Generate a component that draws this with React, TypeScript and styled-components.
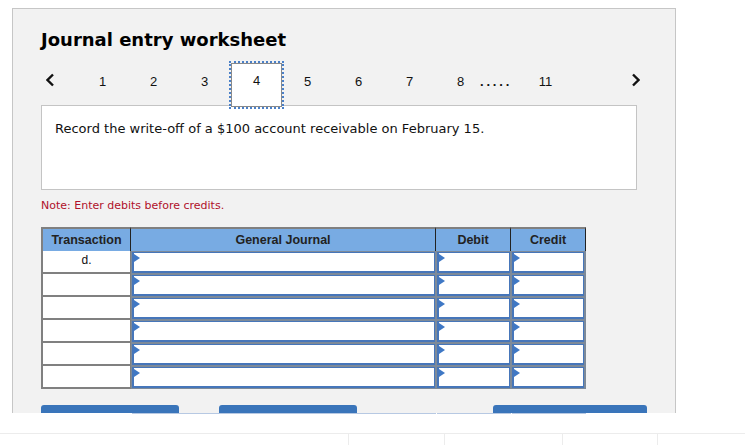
import React from 'react';
import styled, { createGlobalStyle } from 'styled-components';

const GlobalStyle = createGlobalStyle`
  body {
    margin: 0;
    background: #ffffff;
    font-family: "DejaVu Sans", Verdana, sans-serif;
  }
`;

const Page = styled.div`
  width: 745px;
  height: 445px;
  overflow: hidden;
  padding: 8px 0 0 12px;
  box-sizing: border-box;
`;

const Panel = styled.div`
  width: 664px;
  height: 405px;
  box-sizing: border-box;
  border: 1px solid #c6c6c6;
  border-bottom: none;
  background: #f2f2f2;
  overflow: hidden;
  padding: 20px 0 0 28px;
`;

const Title = styled.h1`
  margin: 0;
  font-family: "DejaVu Sans", Verdana, sans-serif;
  font-weight: bold;
  font-size: 18px;
  line-height: 22px;
  color: #000;
`;

const Pager = styled.div`
  display: flex;
  align-items: flex-start;
  width: 599px;
  height: 44px;
  margin-top: 12px;
  font-family: "Liberation Sans", Arial, sans-serif;
  font-size: 13px;
  color: #111;
`;

const Arrow = styled.div<{ $right?: boolean }>`
  width: 36px;
  height: 34px;
  display: flex;
  align-items: center;
  justify-content: ${(p) => (p.$right ? 'flex-end' : 'flex-start')};
  padding: 0 ${(p) => (p.$right ? '0' : '5px')};
  box-sizing: border-box;
  margin-left: ${(p) => (p.$right ? 'auto' : '0')};
`;

const PageItem = styled.div<{ $active?: boolean }>`
  position: relative;
  z-index: 1;
  width: 51px;
  height: 44px;
  box-sizing: border-box;
  text-align: center;
  padding-top: ${(p) => (p.$active ? '9px' : '11px')};
  line-height: 15px;
  background: ${(p) => (p.$active ? '#ffffff' : 'transparent')};
  border: ${(p) => (p.$active ? '1px solid #8a8a8a' : 'none')};
  outline: ${(p) => (p.$active ? '2px dotted #4a80c8' : 'none')};
  outline-offset: 0;
  margin-left: ${(p) => (p.$active ? '1px' : '0')};
`;

const Dots = styled.div`
  width: 32px;
  margin-left: -6px;
  padding-top: 11px;
  line-height: 15px;
  font-weight: bold;
  letter-spacing: 2.8px;
`;

const LastItem = styled(PageItem)`
  margin-left: 8px;
`;

const Question = styled.div`
  width: 596px;
  height: 85px;
  margin-top: -2px;
  box-sizing: border-box;
  background: #ffffff;
  border: 1px solid #c4c4c4;
  padding: 15px 0 0 13px;
  font-size: 13px;
  line-height: 16px;
  color: #111;
`;

const Note = styled.div`
  margin-top: 9px;
  font-size: 11px;
  line-height: 13px;
  color: #b0102a;
`;

const Grid = styled.div`
  display: grid;
  grid-template-columns: 90px 305px 75px 75px;
  width: 545px;
  margin-top: 15px;
  font-family: "Liberation Sans", Arial, sans-serif;
  font-size: 12.5px;
`;

const HeadCell = styled.div<{ $first?: boolean }>`
  height: 24px;
  box-sizing: border-box;
  background: #78abe3;
  border-top: 2px solid #808080;
  border-left: ${(p) => (p.$first ? '2px solid #808080' : 'none')};
  border-right: 1px solid #222;
  display: flex;
  align-items: center;
  justify-content: center;
  font-weight: bold;
  color: #222;
`;

const TxCell = styled.div`
  height: 23px;
  box-sizing: border-box;
  background: #ffffff;
  border-left: 2px solid #808080;
  border-right: 1px solid #808080;
  border-bottom: 2px solid #808080;
  text-align: center;
  line-height: 19px;
  font-size: 12px;
  color: #111;
`;

const EntryCell = styled.div<{ $last?: boolean }>`
  height: 23px;
  box-sizing: border-box;
  background: #7d8a99;
  padding: 1px ${(p) => (p.$last ? '2px' : '1px')} 1px 1px;
`;

const EntryBox = styled.div`
  position: relative;
  height: 100%;
  box-sizing: border-box;
  background: #ffffff;
  border: 1px solid #4676ba;
  border-left-width: 2px;
  border-bottom-width: 2px;

  &::before {
    content: '';
    position: absolute;
    left: 0;
    top: 1px;
    border-top: 4px solid transparent;
    border-bottom: 4px solid transparent;
    border-left: 6px solid #3f78c5;
  }
`;

const Buttons = styled.div`
  display: flex;
  margin-top: 16px;
`;

const ActionButton = styled.div<{ $w: number; $gap: number }>`
  width: ${(p) => p.$w}px;
  height: 20px;
  margin-left: ${(p) => p.$gap}px;
  background: #3a75ba;
  border-radius: 3px 3px 0 0;
`;

const Below = styled.div`
  position: relative;
  height: 32px;
`;

const BlueLine = styled.div`
  display: flex;
  margin-left: 120px;
  height: 1px;
`;

const BlueSeg = styled.div<{ $w: number }>`
  width: ${(p) => p.$w}px;
  margin-right: 1px;
  background: #b7c9e3;
`;

const Footer = styled.div`
  display: flex;
  margin-top: 19px;
  margin-left: -12px;
  height: 12px;
  border-top: 1px solid #ececec;
`;

const FooterCol = styled.div<{ $w: number }>`
  width: ${(p) => p.$w}px;
  border-right: 1px solid #ececec;
`;

const Chevron = ({ right }: { right?: boolean }) => (
  <svg width="9" height="14" viewBox="0 0 9 14">
    <path
      d={right ? 'M2 1.5 L7.5 7 L2 12.5' : 'M7 1.5 L1.5 7 L7 12.5'}
      fill="none"
      stroke="#111"
      strokeWidth="2.4"
    />
  </svg>
);

const rows = ['d.', '', '', '', '', ''];

export default function App() {
  return (
    <>
      <GlobalStyle />
      <Page>
        <Panel>
          <Title>Journal entry worksheet</Title>
          <Pager>
            <Arrow>
              <Chevron />
            </Arrow>
            {[1, 2, 3, 4, 5, 6, 7, 8].map((n) => (
              <PageItem key={n} $active={n === 4}>
                {n}
              </PageItem>
            ))}
            <Dots>.....</Dots>
            <LastItem>11</LastItem>
            <Arrow $right>
              <Chevron right />
            </Arrow>
          </Pager>
          <Question>
            Record the write-off of a $100 account receivable on February 15.
          </Question>
          <Note>Note: Enter debits before credits.</Note>
          <Grid>
            <HeadCell $first>Transaction</HeadCell>
            <HeadCell>General Journal</HeadCell>
            <HeadCell>Debit</HeadCell>
            <HeadCell>Credit</HeadCell>
            {rows.map((t, i) => (
              <React.Fragment key={i}>
                <TxCell>{t}</TxCell>
                <EntryCell>
                  <EntryBox />
                </EntryCell>
                <EntryCell>
                  <EntryBox />
                </EntryCell>
                <EntryCell $last>
                  <EntryBox />
                </EntryCell>
              </React.Fragment>
            ))}
          </Grid>
          <Buttons>
            <ActionButton $w={138} $gap={0} />
            <ActionButton $w={138} $gap={40} />
            <ActionButton $w={154} $gap={136} />
          </Buttons>
        </Panel>
        <Below>
          <BlueLine>
            <BlueSeg $w={304} />
            <BlueSeg $w={74} />
            <BlueSeg $w={74} />
          </BlueLine>
          <Footer>
            <FooterCol $w={348} />
            <FooterCol $w={95} />
            <FooterCol $w={117} />
            <FooterCol $w={94} />
          </Footer>
        </Below>
      </Page>
    </>
  );
}
